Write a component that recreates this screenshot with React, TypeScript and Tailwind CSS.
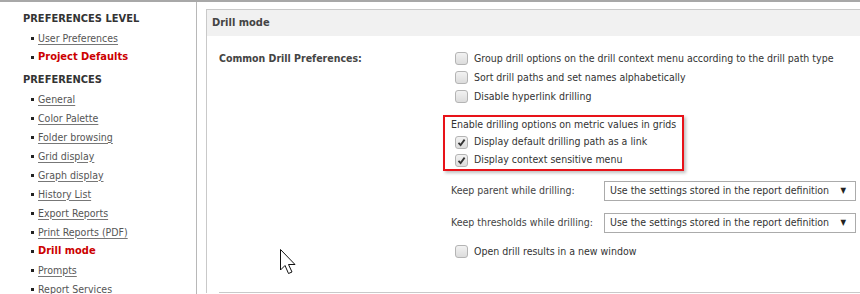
import React from "react";

const font = "font-['DejaVu_Sans_Condensed','Liberation_Sans',sans-serif]";

const levelLinks = [
  { label: "User Preferences", active: false },
  { label: "Project Defaults", active: true },
];

const prefLinks = [
  "General",
  "Color Palette",
  "Folder browsing",
  "Grid display",
  "Graph display",
  "History List",
  "Export Reports",
  "Print Reports (PDF)",
  "Drill mode",
  "Prompts",
  "Report Services",
];

const SideItem: React.FC<{ label: string; active?: boolean }> = ({ label, active }) => (
  <li className="flex items-center h-[19px] pl-[31px]">
    <span className="w-[3px] h-[3px] bg-[#222] mr-[4px] shrink-0" />
    <span
      className={
        active
          ? "text-[#cc0000] font-bold text-[11px]"
          : "text-[#555] underline underline-offset-2 decoration-[#777] text-[10.5px]"
      }
    >
      {label}
    </span>
  </li>
);

const Check: React.FC<{ checked?: boolean }> = ({ checked }) => (
  <span className="w-[13px] h-[13px] rounded-[3px] border border-[#b4b4b4] bg-gradient-to-b from-[#f2f2f2] to-[#dcdcdc] shrink-0 flex items-center justify-center">
    {checked && (
      <svg width="9" height="9" viewBox="0 0 9 9">
        <path d="M1.5 4.8 L3.6 7 L7.6 1.6" fill="none" stroke="#333" strokeWidth="1.8" />
      </svg>
    )}
  </span>
);

const CheckRow: React.FC<{ label: string; checked?: boolean; h?: string }> = ({ label, checked, h }) => (
  <div className={`flex items-center ${h ?? "h-[19px]"} pl-[4px] whitespace-nowrap`}>
    <Check checked={checked} />
    <span className="ml-[6px] text-[#333] text-[10.5px]">{label}</span>
  </div>
);

const SelectRow: React.FC<{ label: string }> = ({ label }) => (
  <div className="flex items-center h-[20px] whitespace-nowrap">
    <span className="w-[153px] text-[#444] text-[10.5px]">{label}</span>
    <div className="w-[252px] h-[20px] border border-[#ababab] bg-white flex items-center pl-[5px] pr-[9px]">
      <span className="flex-1 text-[#333] text-[10.5px]">Use the settings stored in the report definition</span>
      <span className="text-[#222] text-[8px]">▼</span>
    </div>
  </div>
);

export default function App() {
  return (
    <div className={`w-[860px] h-[294px] overflow-hidden bg-white border-t-2 border-[#a8a8a8] flex ${font}`}>
      <aside className="w-[197px] shrink-0 border-r border-[#b8b8b8] pt-[8px]">
        <div className="pl-[23px] h-[19px] flex items-center font-bold text-[11px] text-[#333]">PREFERENCES LEVEL</div>
        <ul>
          {levelLinks.map((l) => (
            <SideItem key={l.label} label={l.label} active={l.active} />
          ))}
        </ul>
        <div className="pl-[23px] h-[19px] mt-[4px] flex items-center font-bold text-[11px] text-[#333]">PREFERENCES</div>
        <ul>
          {prefLinks.map((l) => (
            <SideItem key={l} label={l} active={l === "Drill mode"} />
          ))}
        </ul>
      </aside>

      <main className="flex-1 pl-[9px] pt-[7px] relative">
        <div className="w-[700px] border-l border-t border-[#c9c9c9]">
          <div className="h-[26px] bg-[#f1f1f1] flex items-center pl-[5px] font-bold text-[11px] text-[#444]">
            Drill mode
          </div>
          <div className="flex pl-[12px] pt-[13px]">
            <div className="w-[232px] h-[19px] flex items-center font-bold text-[10.5px] text-[#444]">
              Common Drill Preferences:
            </div>
            <div>
              <CheckRow label="Group drill options on the drill context menu according to the drill path type" />
              <CheckRow label="Sort drill paths and set names alphabetically" />
              <CheckRow label="Disable hyperlink drilling" />

              <div className="mt-[9px] ml-[-8px] w-[241px] border-2 border-[#e81219] pl-[6px] shadow-[2px_2px_3px_rgba(0,0,0,0.25)]">
                <div className="h-[16px] flex items-center text-[#333] text-[10.5px] whitespace-nowrap">
                  Enable drilling options on metric values in grids
                </div>
                <CheckRow label="Display default drilling path as a link" checked h="h-[18px]" />
                <CheckRow label="Display context sensitive menu" checked h="h-[18px]" />
              </div>

              <div className="mt-[10px]">
                <SelectRow label="Keep parent while drilling:" />
              </div>
              <div className="mt-[12px]">
                <SelectRow label="Keep thresholds while drilling:" />
              </div>
              <div className="mt-[9px]">
                <CheckRow label="Open drill results in a new window" />
              </div>
            </div>
          </div>
          <div className="ml-[12px] mt-[31px] border-t border-[#c9c9c9]" />
        </div>

        <svg
          className="absolute left-[82px] top-[246px]"
          width="22"
          height="30"
          viewBox="0 0 22 30"
        >
          <path
            d="M1.5 1.5 L1.5 22 L6 17.5 L9.5 25.5 L13 24 L9.5 16.5 L16 16.5 Z"
            fill="white"
            stroke="#111"
            strokeWidth="1"
            strokeLinejoin="round"
          />
        </svg>
      </main>
    </div>
  );
}
